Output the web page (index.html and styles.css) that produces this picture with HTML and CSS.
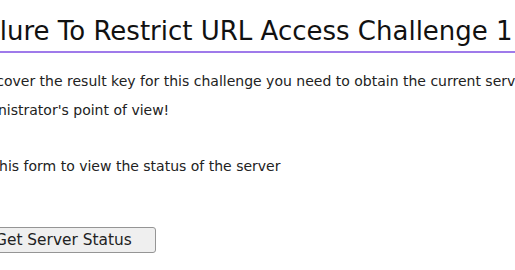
FILE: index.html
```html
<!DOCTYPE html>
<html>
<head>
<meta charset="utf-8">
<link rel="stylesheet" href="styles.css">
</head>
<body>
<div class="page">
  <h1 class="title">Failure To Restrict URL Access Challenge 1</h1>
  <div class="content">
    <p class="intro">To recover the result key for this challenge you need to obtain the current server status from an administrator's point of view!</p>
    <p class="intro form-note">Use this form to view the status of the server</p>
    <form class="form">
      <button type="button" class="btn">Get Server Status</button>
    </form>
  </div>
</div>
</body>
</html>
```
FILE: styles.css
```css
html, body {
  margin: 0;
  padding: 0;
  background: #fff;
  overflow: hidden;
}
body {
  width: 515px;
  height: 270px;
  font-family: "DejaVu Sans", sans-serif;
}
.page {
  margin-left: -37px;
  width: 760px;
}
.title {
  margin: 0 0 0 1px;
  padding-top: 11px;
  height: 40px;
  font-size: 26px;
  font-weight: normal;
  line-height: 40px;
  color: #111;
  border-bottom: 2px solid #9f7aea;
  white-space: nowrap;
}
.content {
  padding-top: 14px;
}
.intro {
  margin: 0;
  font-size: 14px;
  line-height: 29px;
  color: #222;
  width: 700px;
}
.form-note {
  margin-top: 27px;
}
.form {
  margin-top: 46px;
}
.btn {
  font-family: "DejaVu Sans", sans-serif;
  font-size: 15.4px;
  color: #222;
  background: #efefef;
  border: 1px solid #959595;
  border-radius: 3px;
  height: 26px;
  padding: 0 23px 0 31px;
}
```
